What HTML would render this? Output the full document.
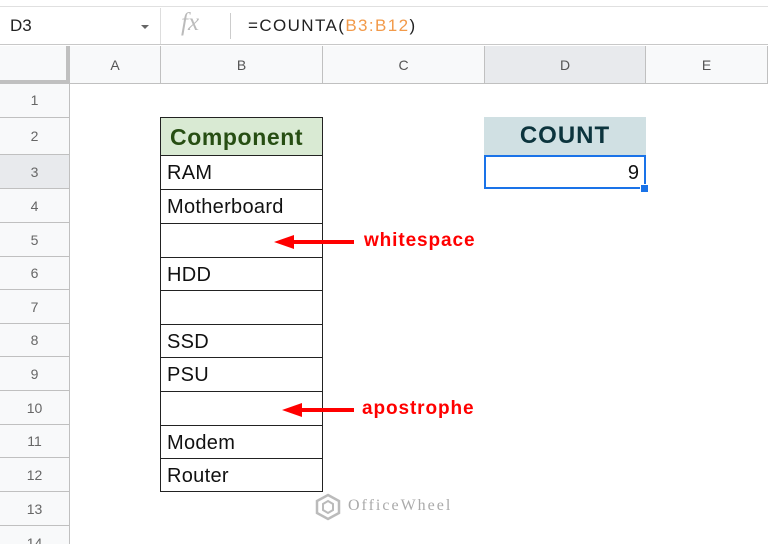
<!DOCTYPE html>
<html><head><meta charset="utf-8"><style>
*{margin:0;padding:0;box-sizing:border-box}
html,body{width:768px;height:544px;overflow:hidden}
body{background:#fff;font-family:"Liberation Sans",Arial,sans-serif;position:relative}
.a{position:absolute}
.rh{position:absolute;left:0;width:69px;background:#f8f9fa;border-bottom:1px solid #c0c0c0;color:#666;font-size:14px;text-align:center}
.ch{position:absolute;top:46px;height:38px;background:#f8f9fa;border-right:1px solid #c0c0c0;color:#555;font-size:14px;text-align:center;line-height:38px}
.cell{position:absolute;left:160px;width:163px;border:1.5px solid #222;font-size:20px;color:#111;padding-left:6px;letter-spacing:0.3px}
</style></head><body>
<div class="a" style="left:0;top:0;width:768px;height:7px;background:#fff;border-bottom:1px solid #e0e0e0"></div>
<div class="a" style="left:0;top:7px;width:768px;height:38px;background:#fff;border-bottom:1px solid #c8c8c8"></div>
<div class="a" style="left:10px;top:16px;font-size:17px;color:#222">D3</div>
<div class="a" style="left:141px;top:25px;width:0;height:0;border-left:4px solid transparent;border-right:4px solid transparent;border-top:4px solid #666"></div>
<div class="a" style="left:160px;top:8px;width:1px;height:36px;background:#ddd"></div>
<div class="a" style="left:181px;top:9px;font-family:'Liberation Serif',serif;font-style:italic;font-size:25px;color:#bbb">fx</div>
<div class="a" style="left:230px;top:13px;width:1px;height:26px;background:#ccc"></div>
<div class="a" style="left:248px;top:16px;font-size:17px;color:#222;letter-spacing:1.4px">=COUNTA(<span style="color:#f29a4a">B3:B12</span>)</div>
<div class="a" style="left:0;top:46px;width:70px;height:38px;background:#f8f9fa;border-right:4px solid #c0c0c0;border-bottom:4px solid #c0c0c0"></div>
<div class="ch" style="left:70px;width:91px">A</div>
<div class="ch" style="left:161px;width:162px">B</div>
<div class="ch" style="left:323px;width:162px">C</div>
<div class="ch" style="left:485px;width:161px;background:#e8eaed">D</div>
<div class="ch" style="left:646px;width:122px">E</div>
<div class="a" style="left:70px;top:83px;width:698px;height:1px;background:#c0c0c0"></div>
<div class="a" style="left:69px;top:84px;width:1px;height:460px;background:#c0c0c0"></div>
<div class="rh" style="top:84px;height:34px;line-height:33px">1</div>
<div class="rh" style="top:118px;height:37px;line-height:37px">2</div>
<div class="rh" style="top:155px;height:34px;line-height:34px;background:#e8eaed">3</div>
<div class="rh" style="top:189px;height:34px;line-height:34px">4</div>
<div class="rh" style="top:223px;height:34px;line-height:34px">5</div>
<div class="rh" style="top:257px;height:33px;line-height:33px">6</div>
<div class="rh" style="top:290px;height:34px;line-height:34px">7</div>
<div class="rh" style="top:324px;height:33px;line-height:33px">8</div>
<div class="rh" style="top:357px;height:34px;line-height:34px">9</div>
<div class="rh" style="top:391px;height:34px;line-height:34px">10</div>
<div class="rh" style="top:425px;height:33px;line-height:33px">11</div>
<div class="rh" style="top:458px;height:34px;line-height:34px">12</div>
<div class="rh" style="top:492px;height:34px;line-height:34px">13</div>
<div class="rh" style="top:526px;height:34px;line-height:34px">14</div>

<div class="cell" style="top:117px;height:39px;background:#d9ead3;color:#274e13;font-weight:bold;font-size:23px;line-height:38px;padding-left:9px;letter-spacing:0.6px">Component</div>
<div class="cell" style="top:155px;height:35px;line-height:35px">RAM</div>
<div class="cell" style="top:189px;height:35px;line-height:35px">Motherboard</div>
<div class="cell" style="top:223px;height:35px"></div>
<div class="cell" style="top:257px;height:34px;line-height:34px">HDD</div>
<div class="cell" style="top:290px;height:35px"></div>
<div class="cell" style="top:324px;height:34px;line-height:34px">SSD</div>
<div class="cell" style="top:357px;height:35px;line-height:35px">PSU</div>
<div class="cell" style="top:391px;height:35px"></div>
<div class="cell" style="top:425px;height:34px;line-height:34px">Modem</div>
<div class="cell" style="top:458px;height:34px;line-height:34px">Router</div>

<div class="a" style="left:484px;top:117px;width:162px;height:38px;background:#d0e0e3;color:#0c343d;font-weight:bold;font-size:24px;text-align:center;line-height:38px;letter-spacing:1px">COUNT</div>
<div class="a" style="left:484px;top:155px;width:162px;height:34px;border:2px solid #1a73e8;font-size:20px;text-align:right;padding-right:5px;line-height:32px;color:#111">9</div>
<div class="a" style="left:640px;top:184px;width:9px;height:9px;background:#1a73e8;border:1px solid #fff"></div>

<svg class="a" style="left:270px;top:232px" width="84" height="20"><path d="M84 10H20" stroke="#f00" stroke-width="4"/><path d="M4 10L24 3V17Z" fill="#f00"/></svg>
<div class="a" style="left:364px;top:230px;font-size:19px;font-weight:bold;color:#f00;letter-spacing:0.9px">whitespace</div>
<svg class="a" style="left:278px;top:400px" width="76" height="20"><path d="M76 10H20" stroke="#f00" stroke-width="4"/><path d="M4 10L24 3V17Z" fill="#f00"/></svg>
<div class="a" style="left:362px;top:398px;font-size:19px;font-weight:bold;color:#f00;letter-spacing:0.9px">apostrophe</div>

<svg class="a" style="left:313px;top:492px" width="30" height="30"><path d="M15 3L26 9V21L15 27L4 21V9Z" fill="none" stroke="#bbb" stroke-width="2.5"/><path d="M15 9L20 12V18L15 21L10 18V12Z" fill="none" stroke="#bbb" stroke-width="2"/></svg>
<div class="a" style="left:348px;top:497px;font-family:'Liberation Serif',serif;font-size:16px;color:#aaa;letter-spacing:2px">OfficeWheel</div>
</body></html>
